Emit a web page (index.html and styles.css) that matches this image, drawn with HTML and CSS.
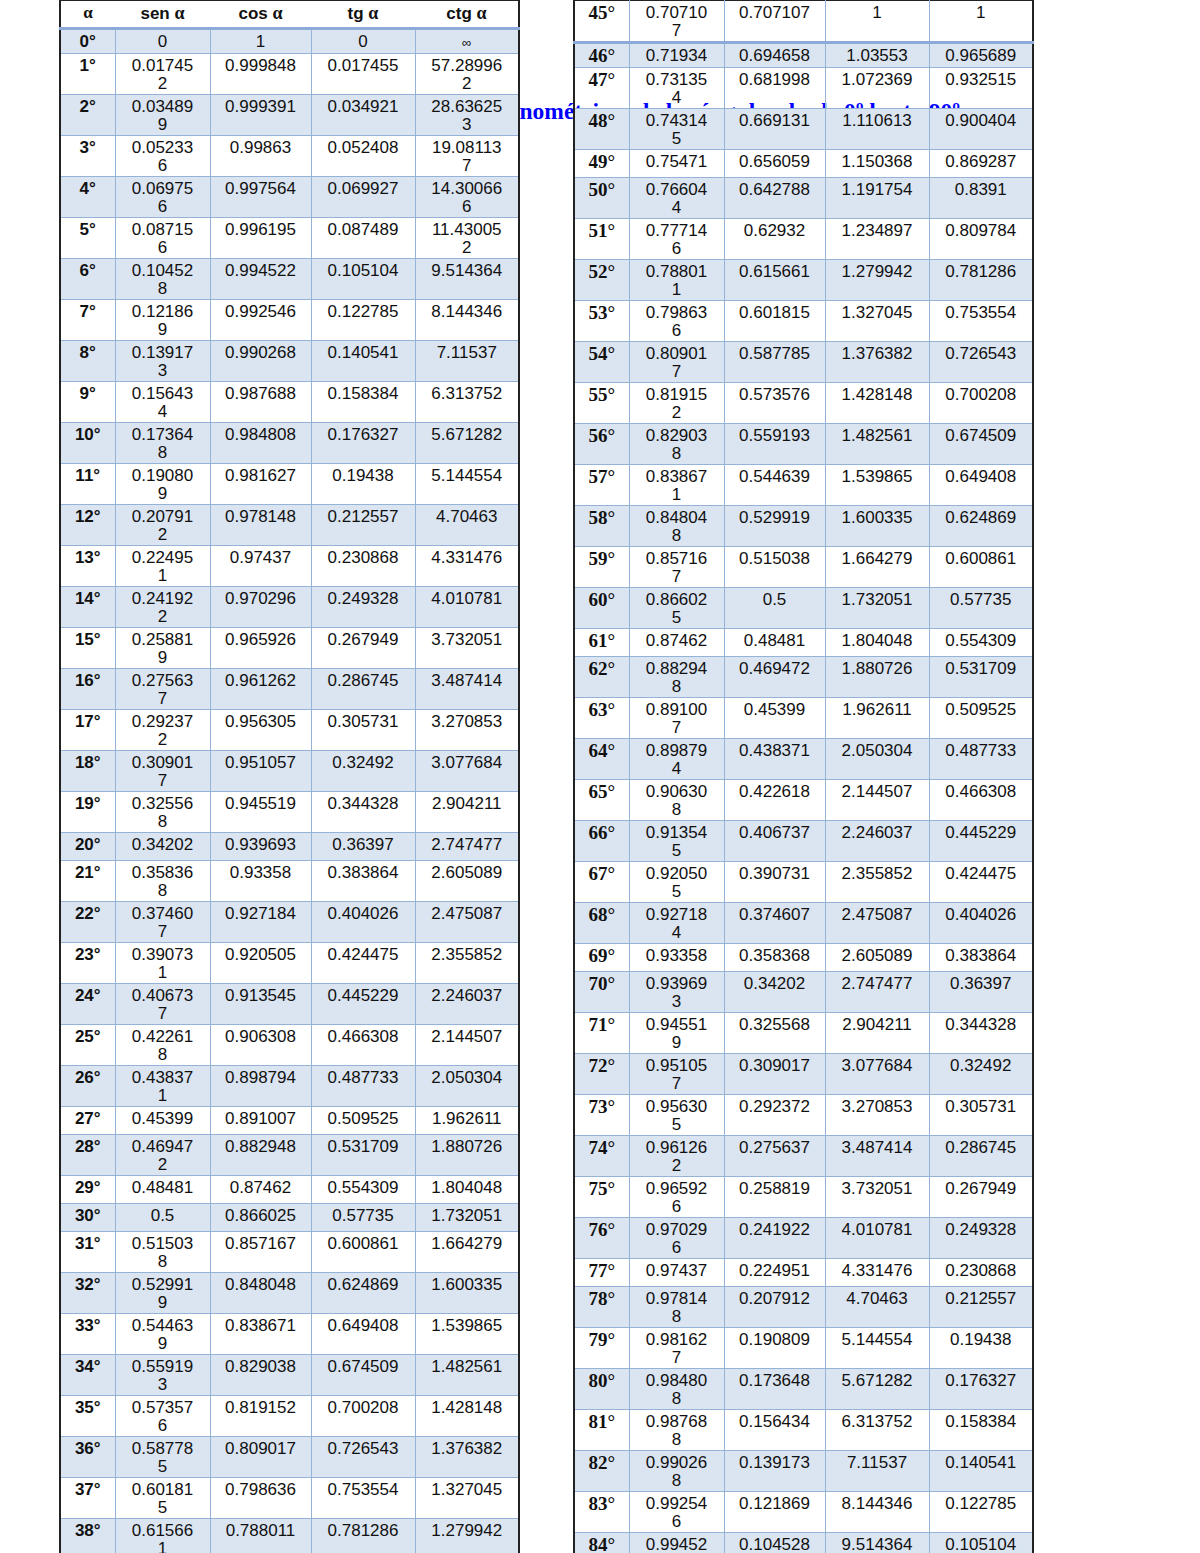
FILE: index.html
```html
<!DOCTYPE html>
<html lang="es">
<head>
<meta charset="utf-8">
<title>Razones trigonométricas de 0º a 90º</title>
<link rel="stylesheet" href="styles.css">
</head>
<body>
<h1 class="title">Tabla de razones trigonométricas de los ángulos desde 0º hasta 90º</h1>
<main class="sheet">
  <table class="trig trig-left">
    <colgroup><col class="c-ang"><col class="c-sen"><col class="c-cos"><col class="c-tg"><col class="c-ctg"></colgroup>
    <thead>
      <tr class="head"><th class="g">α</th><th>sen <span class="g">α</span></th><th>cos <span class="g">α</span></th><th>tg <span class="g">α</span></th><th>ctg <span class="g">α</span></th></tr>
    </thead>
    <tbody>
      <tr><th>0°</th><td>0</td><td>1</td><td>0</td><td><span class="inf">∞</span></td></tr>
      <tr><th>1°</th><td>0.017452</td><td>0.999848</td><td>0.017455</td><td>57.289962</td></tr>
      <tr><th>2°</th><td>0.034899</td><td>0.999391</td><td>0.034921</td><td>28.636253</td></tr>
      <tr><th>3°</th><td>0.052336</td><td>0.99863</td><td>0.052408</td><td>19.081137</td></tr>
      <tr><th>4°</th><td>0.069756</td><td>0.997564</td><td>0.069927</td><td>14.300666</td></tr>
      <tr><th>5°</th><td>0.087156</td><td>0.996195</td><td>0.087489</td><td>11.430052</td></tr>
      <tr><th>6°</th><td>0.104528</td><td>0.994522</td><td>0.105104</td><td>9.514364</td></tr>
      <tr><th>7°</th><td>0.121869</td><td>0.992546</td><td>0.122785</td><td>8.144346</td></tr>
      <tr><th>8°</th><td>0.139173</td><td>0.990268</td><td>0.140541</td><td>7.11537</td></tr>
      <tr><th>9°</th><td>0.156434</td><td>0.987688</td><td>0.158384</td><td>6.313752</td></tr>
      <tr><th>10°</th><td>0.173648</td><td>0.984808</td><td>0.176327</td><td>5.671282</td></tr>
      <tr><th>11°</th><td>0.190809</td><td>0.981627</td><td>0.19438</td><td>5.144554</td></tr>
      <tr><th>12°</th><td>0.207912</td><td>0.978148</td><td>0.212557</td><td>4.70463</td></tr>
      <tr><th>13°</th><td>0.224951</td><td>0.97437</td><td>0.230868</td><td>4.331476</td></tr>
      <tr><th>14°</th><td>0.241922</td><td>0.970296</td><td>0.249328</td><td>4.010781</td></tr>
      <tr><th>15°</th><td>0.258819</td><td>0.965926</td><td>0.267949</td><td>3.732051</td></tr>
      <tr><th>16°</th><td>0.275637</td><td>0.961262</td><td>0.286745</td><td>3.487414</td></tr>
      <tr><th>17°</th><td>0.292372</td><td>0.956305</td><td>0.305731</td><td>3.270853</td></tr>
      <tr><th>18°</th><td>0.309017</td><td>0.951057</td><td>0.32492</td><td>3.077684</td></tr>
      <tr><th>19°</th><td>0.325568</td><td>0.945519</td><td>0.344328</td><td>2.904211</td></tr>
      <tr><th>20°</th><td>0.34202</td><td>0.939693</td><td>0.36397</td><td>2.747477</td></tr>
      <tr><th>21°</th><td>0.358368</td><td>0.93358</td><td>0.383864</td><td>2.605089</td></tr>
      <tr><th>22°</th><td>0.374607</td><td>0.927184</td><td>0.404026</td><td>2.475087</td></tr>
      <tr><th>23°</th><td>0.390731</td><td>0.920505</td><td>0.424475</td><td>2.355852</td></tr>
      <tr><th>24°</th><td>0.406737</td><td>0.913545</td><td>0.445229</td><td>2.246037</td></tr>
      <tr><th>25°</th><td>0.422618</td><td>0.906308</td><td>0.466308</td><td>2.144507</td></tr>
      <tr><th>26°</th><td>0.438371</td><td>0.898794</td><td>0.487733</td><td>2.050304</td></tr>
      <tr><th>27°</th><td>0.45399</td><td>0.891007</td><td>0.509525</td><td>1.962611</td></tr>
      <tr><th>28°</th><td>0.469472</td><td>0.882948</td><td>0.531709</td><td>1.880726</td></tr>
      <tr><th>29°</th><td>0.48481</td><td>0.87462</td><td>0.554309</td><td>1.804048</td></tr>
      <tr><th>30°</th><td>0.5</td><td>0.866025</td><td>0.57735</td><td>1.732051</td></tr>
      <tr><th>31°</th><td>0.515038</td><td>0.857167</td><td>0.600861</td><td>1.664279</td></tr>
      <tr><th>32°</th><td>0.529919</td><td>0.848048</td><td>0.624869</td><td>1.600335</td></tr>
      <tr><th>33°</th><td>0.544639</td><td>0.838671</td><td>0.649408</td><td>1.539865</td></tr>
      <tr><th>34°</th><td>0.559193</td><td>0.829038</td><td>0.674509</td><td>1.482561</td></tr>
      <tr><th>35°</th><td>0.573576</td><td>0.819152</td><td>0.700208</td><td>1.428148</td></tr>
      <tr><th>36°</th><td>0.587785</td><td>0.809017</td><td>0.726543</td><td>1.376382</td></tr>
      <tr><th>37°</th><td>0.601815</td><td>0.798636</td><td>0.753554</td><td>1.327045</td></tr>
      <tr><th>38°</th><td>0.615661</td><td>0.788011</td><td>0.781286</td><td>1.279942</td></tr>
      <tr><th>39°</th><td>0.62932</td><td>0.777146</td><td>0.809784</td><td>1.234897</td></tr>
      <tr><th>40°</th><td>0.642788</td><td>0.766044</td><td>0.8391</td><td>1.191754</td></tr>
      <tr><th>41°</th><td>0.656059</td><td>0.75471</td><td>0.869287</td><td>1.150368</td></tr>
      <tr><th>42°</th><td>0.669131</td><td>0.743145</td><td>0.900404</td><td>1.110613</td></tr>
      <tr><th>43°</th><td>0.681998</td><td>0.731354</td><td>0.932515</td><td>1.072369</td></tr>
      <tr><th>44°</th><td>0.694658</td><td>0.71934</td><td>0.965689</td><td>1.03553</td></tr>
    </tbody>
  </table>

  <table class="trig trig-right">
    <colgroup><col class="c-ang"><col class="c-sen"><col class="c-cos"><col class="c-tg"><col class="c-ctg"></colgroup>
    <thead>
      <tr class="lead"><th>45°</th><td>0.707107</td><td>0.707107</td><td>1</td><td>1</td></tr>
    </thead>
    <tbody>
      <tr><th>46°</th><td>0.71934</td><td>0.694658</td><td>1.03553</td><td>0.965689</td></tr>
      <tr><th>47°</th><td>0.731354</td><td>0.681998</td><td>1.072369</td><td>0.932515</td></tr>
      <tr><th>48°</th><td>0.743145</td><td>0.669131</td><td>1.110613</td><td>0.900404</td></tr>
      <tr><th>49°</th><td>0.75471</td><td>0.656059</td><td>1.150368</td><td>0.869287</td></tr>
      <tr><th>50°</th><td>0.766044</td><td>0.642788</td><td>1.191754</td><td>0.8391</td></tr>
      <tr><th>51°</th><td>0.777146</td><td>0.62932</td><td>1.234897</td><td>0.809784</td></tr>
      <tr><th>52°</th><td>0.788011</td><td>0.615661</td><td>1.279942</td><td>0.781286</td></tr>
      <tr><th>53°</th><td>0.798636</td><td>0.601815</td><td>1.327045</td><td>0.753554</td></tr>
      <tr><th>54°</th><td>0.809017</td><td>0.587785</td><td>1.376382</td><td>0.726543</td></tr>
      <tr><th>55°</th><td>0.819152</td><td>0.573576</td><td>1.428148</td><td>0.700208</td></tr>
      <tr><th>56°</th><td>0.829038</td><td>0.559193</td><td>1.482561</td><td>0.674509</td></tr>
      <tr><th>57°</th><td>0.838671</td><td>0.544639</td><td>1.539865</td><td>0.649408</td></tr>
      <tr><th>58°</th><td>0.848048</td><td>0.529919</td><td>1.600335</td><td>0.624869</td></tr>
      <tr><th>59°</th><td>0.857167</td><td>0.515038</td><td>1.664279</td><td>0.600861</td></tr>
      <tr><th>60°</th><td>0.866025</td><td>0.5</td><td>1.732051</td><td>0.57735</td></tr>
      <tr><th>61°</th><td>0.87462</td><td>0.48481</td><td>1.804048</td><td>0.554309</td></tr>
      <tr><th>62°</th><td>0.882948</td><td>0.469472</td><td>1.880726</td><td>0.531709</td></tr>
      <tr><th>63°</th><td>0.891007</td><td>0.45399</td><td>1.962611</td><td>0.509525</td></tr>
      <tr><th>64°</th><td>0.898794</td><td>0.438371</td><td>2.050304</td><td>0.487733</td></tr>
      <tr><th>65°</th><td>0.906308</td><td>0.422618</td><td>2.144507</td><td>0.466308</td></tr>
      <tr><th>66°</th><td>0.913545</td><td>0.406737</td><td>2.246037</td><td>0.445229</td></tr>
      <tr><th>67°</th><td>0.920505</td><td>0.390731</td><td>2.355852</td><td>0.424475</td></tr>
      <tr><th>68°</th><td>0.927184</td><td>0.374607</td><td>2.475087</td><td>0.404026</td></tr>
      <tr><th>69°</th><td>0.93358</td><td>0.358368</td><td>2.605089</td><td>0.383864</td></tr>
      <tr><th>70°</th><td>0.939693</td><td>0.34202</td><td>2.747477</td><td>0.36397</td></tr>
      <tr><th>71°</th><td>0.945519</td><td>0.325568</td><td>2.904211</td><td>0.344328</td></tr>
      <tr><th>72°</th><td>0.951057</td><td>0.309017</td><td>3.077684</td><td>0.32492</td></tr>
      <tr><th>73°</th><td>0.956305</td><td>0.292372</td><td>3.270853</td><td>0.305731</td></tr>
      <tr><th>74°</th><td>0.961262</td><td>0.275637</td><td>3.487414</td><td>0.286745</td></tr>
      <tr><th>75°</th><td>0.965926</td><td>0.258819</td><td>3.732051</td><td>0.267949</td></tr>
      <tr><th>76°</th><td>0.970296</td><td>0.241922</td><td>4.010781</td><td>0.249328</td></tr>
      <tr><th>77°</th><td>0.97437</td><td>0.224951</td><td>4.331476</td><td>0.230868</td></tr>
      <tr><th>78°</th><td>0.978148</td><td>0.207912</td><td>4.70463</td><td>0.212557</td></tr>
      <tr><th>79°</th><td>0.981627</td><td>0.190809</td><td>5.144554</td><td>0.19438</td></tr>
      <tr><th>80°</th><td>0.984808</td><td>0.173648</td><td>5.671282</td><td>0.176327</td></tr>
      <tr><th>81°</th><td>0.987688</td><td>0.156434</td><td>6.313752</td><td>0.158384</td></tr>
      <tr><th>82°</th><td>0.990268</td><td>0.139173</td><td>7.11537</td><td>0.140541</td></tr>
      <tr><th>83°</th><td>0.992546</td><td>0.121869</td><td>8.144346</td><td>0.122785</td></tr>
      <tr><th>84°</th><td>0.994522</td><td>0.104528</td><td>9.514364</td><td>0.105104</td></tr>
      <tr><th>85°</th><td>0.996195</td><td>0.087156</td><td>11.430052</td><td>0.087489</td></tr>
      <tr><th>86°</th><td>0.997564</td><td>0.069756</td><td>14.300666</td><td>0.069927</td></tr>
      <tr><th>87°</th><td>0.99863</td><td>0.052336</td><td>19.081137</td><td>0.052408</td></tr>
      <tr><th>88°</th><td>0.999391</td><td>0.034899</td><td>28.636253</td><td>0.034921</td></tr>
      <tr><th>89°</th><td>0.999848</td><td>0.017452</td><td>57.289962</td><td>0.017455</td></tr>
      <tr><th>90°</th><td>1</td><td>0</td><td><span class="inf">∞</span></td><td>0</td></tr>
    </tbody>
  </table>
</main>
</body>
</html>
```

FILE: styles.css
```css
html {
  margin: 0;
  padding: 0;
  background: #ffffff;
}

body {
  margin: 0;
  padding: 0;
  font-family: "Liberation Sans", Arial, sans-serif;
  color: #111111;
}

.title {
  position: absolute;
  z-index: -1;
  top: 99px;
  right: 240px;
  margin: 0;
  font-family: "Liberation Serif", "Times New Roman", serif;
  font-weight: bold;
  font-size: 23.5px;
  line-height: 24px;
  color: #0000ff;
  white-space: nowrap;
}

.sheet {
  display: flex;
  align-items: flex-start;
  gap: 53px;
  padding-left: 59px;
}

.trig {
  border-collapse: collapse;
  table-layout: fixed;
  width: 459px;
  border: 2px solid #222222;
  border-top: 1px solid #222222;
  font-size: 17px;
  line-height: 18px;
}

.c-ang { width: 55px; }
.c-sen { width: 95px; }
.c-cos { width: 101px; }
.c-tg  { width: 104px; }
.c-ctg { width: 104px; }

.trig td,
.trig th {
  border: 1px solid #95b3d7;
  padding: 3px 13px 1px;
  text-align: center;
  vertical-align: top;
  word-break: break-all;
  font-weight: normal;
}

.trig th {
  font-weight: bold;
  padding-left: 4px;
  padding-right: 4px;
}

.trig tbody tr {
  height: 28px;
}

.trig tbody tr:first-child {
  height: 25px;
}

.trig tbody tr:nth-child(odd) {
  background: #dbe5f1;
}

/* header row of the left table */
.trig .head {
  height: 28px;
}

.trig .head th {
  vertical-align: middle;
  padding: 0 4px 2px;
  border-left: none;
  border-right: none;
  border-top: none;
  border-bottom: 3px solid #8eaadb;
  font-size: 17px;
}

.g {
  font-family: "Liberation Serif", "Times New Roman", serif;
  font-size: 18px;
}

.inf {
  font-size: 13px;
}

/* right table: leading 45° row takes the header styling */
.trig .lead td,
.trig .lead th {
  border-bottom: 3px solid #8eaadb;
  border-top: none;
}

.trig-right th {
  font-family: "Liberation Serif", "Times New Roman", serif;
  font-size: 19px;
}
```
